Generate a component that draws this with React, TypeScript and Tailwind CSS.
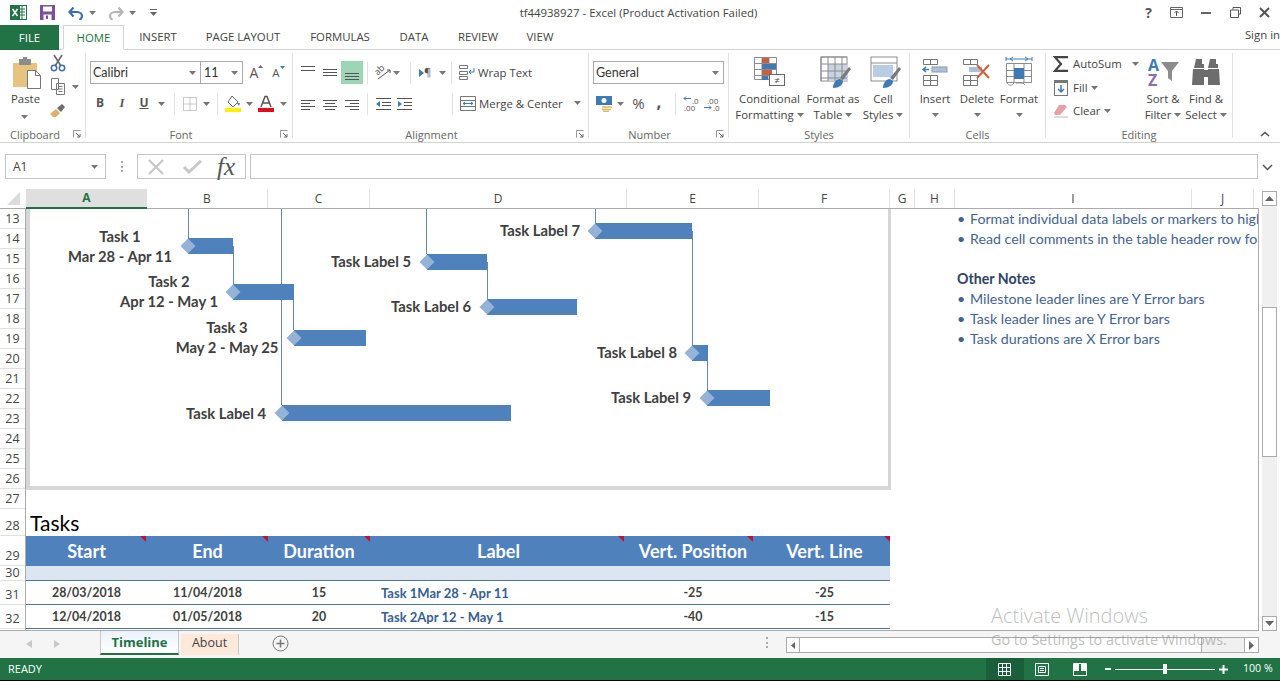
import type { ReactNode } from 'react';

const ui = "font-['Open_Sans',sans-serif]";
const cal = "font-['Lato',sans-serif]";

function Caret({ className = '' }: { className?: string }) {
  return (
    <svg width="7" height="4" viewBox="0 0 7 4" className={`shrink-0 ${className}`}>
      <path d="M0 0h7L3.500 4z" fill="#777" />
    </svg>
  );
}

function Launcher() {
  return (
    <svg width="8" height="8" viewBox="0 0 8 8" className="shrink-0">
      <path d="M.5 .5h7M.5 .5v7" stroke="#999" fill="none" />
      <path d="M3 3l4 4M7 4v3H4" stroke="#666" fill="none" />
    </svg>
  );
}

function Slot({ className = 'w-[22px]', children }: { className?: string; children?: ReactNode }) {
  return <div className={`h-[23px] flex items-center justify-center shrink-0 ${className}`}>{children}</div>;
}

function Sep() {
  return <div className="w-px h-[22px] bg-[#e1e1e1] shrink-0" />;
}

function Group({ width, label, launcher, labelClass = '', children }: { width: string; label: string; launcher?: boolean; labelClass?: string; children: ReactNode }) {
  return (
    <div className={`${width} h-[85px] mt-[3px] border-r border-[#e1e1e1] flex flex-col shrink-0`}>
      <div className="h-[71px] shrink-0">{children}</div>
      <div className="h-[14px] shrink-0 mt-[3px] relative flex items-center">
        <span className={`flex-1 text-center text-[11px] leading-none text-[#666] ${labelClass}`}>{label}</span>
        {launcher && <span className="absolute right-[4px] top-[3px] flex"><Launcher /></span>}
      </div>
    </div>
  );
}

function Lines({ d }: { d: string }) {
  return (
    <svg width="16" height="14" viewBox="0 0 16 14">
      <path d={d} stroke="#555" fill="none" />
    </svg>
  );
}

function BigBtn({ width, icon, line1, line2, caret }: { width: string; icon: ReactNode; line1: string; line2?: string; caret?: boolean }) {
  return (
    <div className={`${width} flex flex-col items-center shrink-0`}>
      <div className="h-[36px] mt-[1px] flex items-center justify-center">{icon}</div>
      <div className="mt-[1px] text-[11.400px] leading-[16px] text-[#444] whitespace-nowrap">{line1}</div>
      <div className="h-[16px] flex items-center gap-[3px] text-[11.400px] leading-[16px] text-[#444] whitespace-nowrap">
        {line2}
        {caret && <Caret />}
      </div>
    </div>
  );
}

function TableIcon({ variant }: { variant: 'table' | 'cell' }) {
  const rows = variant === 'table' ? [0, 7, 14, 21] : [0, 9, 24];
  const cols = variant === 'table' ? [0, 7, 14, 21, 28] : [0, 26];
  return (
    <svg width="32" height="32" viewBox="0 0 32 32" className="ml-[5px]">
      <rect x="1" y="1" width="26" height="24" fill="#fff" stroke="#8c8c8c" />
      {variant === 'table' ? (
        <>
          <rect x="8" y="8" width="20" height="17" fill="#c9d3e3" />
          {rows.map((y) => <path key={y} d={`M1 ${y + 1}h26`} stroke="#8c8c8c" />)}
          {cols.slice(0, 4).map((x) => <path key={x} d={`M${x + 1} 1v24`} stroke="#8c8c8c" />)}
        </>
      ) : (
        <>
          <path d="M1 7h26" stroke="#8c8c8c" />
          <rect x="3" y="9" width="20" height="12" fill="#b8cce4" />
        </>
      )}
      <path d="M20 22l9-11 2 2-8 11z" fill="#7a7a7a" />
      <path d="M13 32c0-5 3-9 7-9l3 2c0 4-4 7-10 7z" fill="#3f7ab8" />
    </svg>
  );
}

function Ribbon() {
  return (
    <div className={`h-[93px] border-b border-[#d4d4d4] flex bg-white ${ui}`}>
      <Group width="w-[86px]" label="Clipboard" launcher labelClass="pr-[26px] text-left pl-[10px]">
        <div className="flex">
          <div className="w-[50px] pl-[12px] flex flex-col">
            <svg width="30" height="32" viewBox="0 0 30 32" className="mt-[4px]">
              <rect x="1" y="6" width="24" height="24" fill="#e6c47f" />
              <rect x="7" y="2" width="12" height="6" fill="#8c8c8c" />
              <rect x="11" y="0" width="4" height="3" fill="#8c8c8c" />
              <path d="M15.500 13.500h8l5 5v13h-13z" fill="#fff" stroke="#777" />
              <path d="M23.500 13.500v5h5" fill="none" stroke="#777" />
            </svg>
            <div className="text-[11.400px] leading-[16px] mt-[2px] -ml-[1px] text-[#444]">Paste</div>
            <Caret className="ml-[9px] mt-[8px]" />
          </div>
          <div className="flex flex-col pt-[1px]">
            <svg width="16" height="18" viewBox="0 0 16 18">
              <path d="M4 1l7 11M12 1L5 12" stroke="#6a6a6a" strokeWidth="1.600" />
              <circle cx="4" cy="14" r="2.700" fill="none" stroke="#3f6fa8" strokeWidth="1.500" />
              <circle cx="12" cy="14" r="2.700" fill="none" stroke="#3f6fa8" strokeWidth="1.500" />
            </svg>
            <div className="flex items-center mt-[6px] gap-[6px]">
              <svg width="16" height="17" viewBox="0 0 16 17">
                <path d="M1.500 .5h7v11h-7zM6.500 5.500h8v11h-8z" fill="#fff" stroke="#7a7a7a" />
                <path d="M8.500 8.500h4M8.500 11h4M8.500 13.500h4" stroke="#7a7a7a" />
              </svg>
              <Caret />
            </div>
            <svg width="16" height="14" viewBox="0 0 16 14" className="mt-[8px]">
              <path d="M0 11l6-5 4 4-4 4H3z" fill="#d9b26d" />
              <path d="M7 5l5-4 3 3-4 5z" fill="#6d6d6d" />
            </svg>
          </div>
        </div>
      </Group>

      <Group width="w-[207px]" label="Font" launcher labelClass="pr-[16px]">
        <div className="flex items-center pl-[4px] mt-[8px] h-[23px]">
          <div className={`w-[111px] h-[23px] border border-[#ababab] flex items-center justify-between pl-[2px] pr-[4px] pt-[1px] text-[12.500px] text-[#333] ${cal}`}>
            Calibri<Caret />
          </div>
          <div className={`w-[42px] h-[23px] border border-[#ababab] border-l-0 flex items-center justify-between pl-[3px] pr-[4px] pt-[1px] text-[12.500px] text-[#333] ${cal}`}>
            11<Caret />
          </div>
          <Slot className="w-[22px]">
            <span className="text-[14px] text-[#555] relative">A<svg width="5" height="3" className="absolute right-[-5px] top-[3px]"><path d="M0 3h5L2.500 0z" fill="#666" /></svg></span>
          </Slot>
          <Slot className="w-[22px]">
            <span className="text-[11.500px] text-[#555] relative">A<svg width="5" height="3" className="absolute right-[-5px] top-[2px]"><path d="M0 0h5L2.500 3z" fill="#3f7ab8" /></svg></span>
          </Slot>
        </div>
        <div className="flex items-center pl-[3px] mt-[8px]">
          <Slot><span className="text-[12px] font-bold text-[#555] -mt-[1px]">B</span></Slot>
          <Slot><span className="text-[12.500px] italic text-[#555] font-['Liberation_Serif',serif] font-bold -mt-[1px]">I</span></Slot>
          <Slot className="w-[22px]"><span className="text-[12px] underline font-bold text-[#555] -mt-[1px]">U</span></Slot>
          <Slot className="w-[12px]"><Caret /></Slot>
          <Slot className="w-[7px]" />
          <Sep />
          <Slot className="w-[29px]">
            <svg width="14" height="14" viewBox="0 0 14 14">
              <path d="M.5 .5h13v13H.5zM7 .5v13M.5 7h13" stroke="#999" strokeDasharray="1 1" fill="none" />
            </svg>
          </Slot>
          <Slot className="w-[4px]"><Caret /></Slot>
          <Slot className="w-[9px]" />
          <Sep />
          <Slot className="w-[30px]">
            <svg width="17" height="17" viewBox="0 0 17 17">
              <path d="M7 1l6 6-5 5-5-5z" fill="#fff" stroke="#666" />
              <path d="M12 8l2 3 1-3z" fill="#3f7ab8" />
              <rect x="0" y="13" width="16" height="4" fill="#fff200" />
            </svg>
          </Slot>
          <Slot className="w-[3px]"><Caret /></Slot>
          <Slot className="w-[30px]">
            <svg width="16" height="17" viewBox="0 0 16 17">
              <path d="M3 12L7 1.500h2L13 12M4.800 8h6.400" stroke="#555" strokeWidth="1.500" fill="none" />
              <rect x="0" y="13" width="16" height="4" fill="#e00b1c" />
            </svg>
          </Slot>
          <Slot className="w-[4px]"><Caret /></Slot>
        </div>
      </Group>

      <Group width="w-[296px]" label="Alignment" launcher labelClass="pr-[18px]">
        <div className="flex items-center pl-[4px] mt-[8px]">
          <Slot><Lines d="M1 .5h14M1 4.500h14" /></Slot>
          <Slot><Lines d="M1 3.500h14M1 6.500h14M1 9.500h14" /></Slot>
          <Slot className="w-[22px] bg-[#9fd5b7]"><Lines d="M1 7.500h14M1 10.500h14M1 13.500h14" /></Slot>
          <Slot className="w-[4px]" />
          <Sep />
          <Slot className="w-[29px]">
            <span className="relative w-[18px] h-[16px]">
              <span className="absolute left-[0px] top-[-2px] text-[9px] text-[#555] rotate-[-45deg]">ab</span>
              <svg width="18" height="16" viewBox="0 0 18 16" className="absolute left-0 top-0"><path d="M4 14L16 5M13 5h3v3" stroke="#555" fill="none" /></svg>
            </span>
          </Slot>
          <Slot className="w-[7px] -ml-[4px]"><Caret /></Slot>
          <Slot className="w-[10px]" />
          <Sep />
          <Slot className="w-[28px]">
            <span className="flex items-center text-[11px] text-[#555]">
              <svg width="5" height="8" viewBox="0 0 5 8"><path d="M0 0l5 4-5 4z" fill="#3f7ab8" /></svg>¶
            </span>
          </Slot>
          <Slot className="w-[7px]"><Caret /></Slot>
          <Slot className="w-[5px]" />
          <Sep />
          <div className="flex items-center ml-[7px] gap-[3px] text-[11.400px] text-[#444]">
            <svg width="16" height="16" viewBox="0 0 16 16">
              <path d="M.5 1.500h8v3h-8zM.5 7.500h8v3h-8zM.5 12.500h8v3h-8z" fill="none" stroke="#777" />
              <path d="M15 4v4h-5M12 6l-2 2 2 2" fill="none" stroke="#3f7ab8" />
            </svg>
            Wrap Text
          </div>
        </div>
        <div className="flex items-center pl-[4px] mt-[8px]">
          <Slot><Lines d="M1 3.500h14M1 6.500h9M1 9.500h14M1 12.500h9" /></Slot>
          <Slot><Lines d="M1 3.500h14M3 6.500h10M1 9.500h14M3 12.500h10" /></Slot>
          <Slot><Lines d="M1 3.500h14M6 6.500h9M1 9.500h14M6 12.500h9" /></Slot>
          <Slot className="w-[4px]" />
          <Sep />
          <Slot className="w-[29px]">
            <svg width="16" height="14" viewBox="0 0 16 14"><path d="M1 1.500h15M7 5.500h9M7 8.500h9M1 12.500h15" stroke="#555" /><path d="M5 4L1 7l4 3z" fill="#3f7ab8" /></svg>
          </Slot>
          <Slot className="w-[16px]">
            <svg width="16" height="14" viewBox="0 0 16 14"><path d="M0 1.500h15M7 5.500h8M7 8.500h8M0 12.500h15" stroke="#555" /><path d="M1 4l4 3-4 3z" fill="#3f7ab8" /></svg>
          </Slot>
          <Slot className="w-[39px]" />
          <Sep />
          <div className="flex items-center ml-[7px] gap-[3px] text-[11.400px] text-[#444]">
            <svg width="16" height="15" viewBox="0 0 16 15">
              <path d="M.5 .5h15v14H.5zM.5 4.500h15M.5 10.500h15" fill="none" stroke="#777" />
              <path d="M3 7.500h10M5 6l-2 1.500L5 9M11 6l2 1.500L11 9" fill="none" stroke="#3f7ab8" />
            </svg>
            Merge &amp; Center
            <Caret className="ml-[8px]" />
          </div>
        </div>
      </Group>

      <Group width="w-[140px]" label="Number" launcher labelClass="pr-[18px]">
        <div className="pl-[4px] mt-[8px]">
          <div className={`w-[131px] h-[23px] border border-[#ababab] flex items-center justify-between pl-[2px] pr-[4px] pt-[1px] text-[12.500px] text-[#333] ${cal}`}>
            General<Caret />
          </div>
        </div>
        <div className="flex items-center pl-[6px] mt-[8px]">
          <Slot className="w-[19px]">
            <svg width="17" height="16" viewBox="0 0 17 16">
              <rect x="0" y="0" width="16" height="9" fill="#3f7ab8" />
              <circle cx="8" cy="4.500" r="2.500" fill="#fff" />
              <path d="M6 11h10M6 13.500h9M7 15.500h6" stroke="#e3b85c" strokeWidth="1.500" />
            </svg>
          </Slot>
          <Slot className="w-[13px]"><Caret /></Slot>
          <Slot className="w-[23px]"><span className="text-[15px] text-[#555]">%</span></Slot>
          <Slot className="w-[18px]"><span className="text-[17px] font-bold text-[#555] leading-none mt-[-4px]">,</span></Slot>
          <Slot className="w-[7px]" />
          <Sep />
          <Slot className="w-[31px]">
            <svg width="18" height="17" viewBox="0 0 18 17" className="shrink-0">
              <path d="M8 3.500H1M3 1.500l-2 2 2 2" stroke="#3f7ab8" fill="none" />
              <text x="9" y="8.500" fontSize="8" fill="#555" fontFamily="Open Sans">.0</text>
              <text x="1" y="16" fontSize="8" fill="#555" fontFamily="Open Sans">.00</text>
            </svg>
          </Slot>
          <Slot className="w-[12px]">
            <svg width="18" height="17" viewBox="0 0 18 17" className="shrink-0">
              <text x="3" y="8.500" fontSize="8" fill="#555" fontFamily="Open Sans">.00</text>
              <path d="M0 12.500h7M5 10.500l2 2-2 2" stroke="#3f7ab8" fill="none" />
              <text x="9" y="16" fontSize="8" fill="#555" fontFamily="Open Sans">.0</text>
            </svg>
          </Slot>
        </div>
      </Group>

      <Group width="w-[181px]" label="Styles">
        <div className="flex pl-[8px]">
          <BigBtn width="w-[65px]" line1="Conditional" line2="Formatting" caret icon={
            <svg width="32" height="32" viewBox="0 0 32 32">
              <path d="M.5 1.500h22v22H.5zM.5 7.500h22M.5 13.500h22M.5 19.500h22M8 1.500v22M15 1.500v22" fill="#fff" stroke="#8c8c8c" />
              <rect x="8" y="2" width="7" height="5" fill="#c8603c" />
              <rect x="8" y="8" width="14" height="5" fill="#3f7ab8" />
              <rect x="8" y="14" width="10" height="5" fill="#c8603c" />
              <rect x="8" y="20" width="6" height="4" fill="#3f7ab8" />
              <rect x="15.500" y="18.500" width="15" height="11" fill="#fff" stroke="#666" />
              <text x="23" y="28" fontSize="10" textAnchor="middle" fill="#444" fontFamily="Open Sans">≠</text>
            </svg>
          } />
          <BigBtn width="w-[62px]" line1="Format as" line2="Table" caret icon={<TableIcon variant="table" />} />
          <BigBtn width="w-[38px]" line1="Cell" line2="Styles" caret icon={<TableIcon variant="cell" />} />
        </div>
      </Group>

      <Group width="w-[136px]" label="Cells">
        <div className="flex pl-[4px]">
          <BigBtn width="w-[42px]" line1="Insert" caret icon={
            <svg width="28" height="30" viewBox="0 0 28 30" className="-ml-[2px]">
              <path d="M3.500 2.500h14v5h-14zM10.500 2.500v5M3.500 18.500h14v10h-14zM3.500 23.500h14M10.500 18.500v10" fill="none" stroke="#777" />
              <rect x="12" y="10" width="15" height="5" fill="#b0bfd4" stroke="#8a9ab0" />
              <path d="M9 12.500H3M6 10l-3 2.500L6 15" stroke="#3f7ab8" fill="none" strokeWidth="1.500" />
            </svg>
          } />
          <BigBtn width="w-[42px]" line1="Delete" caret icon={
            <svg width="32" height="30" viewBox="0 0 32 30" className="-ml-[2px]">
              <path d="M3.500 2.500h14v5h-14zM10.500 2.500v5M3.500 18.500h14v10h-14zM3.500 23.500h14M10.500 18.500v10" fill="none" stroke="#777" />
              <rect x="9" y="10" width="13" height="5" fill="#b0bfd4" />
              <path d="M17 8l12 13M29 8L17 21" stroke="#d0603c" strokeWidth="2" />
            </svg>
          } />
          <BigBtn width="w-[42px]" line1="Format" caret icon={
            <svg width="30" height="32" viewBox="0 0 30 32">
              <path d="M2 3h26M2 1v4M28 1v4M6 3l3-2M6 3l3 2M24 3l-3-2M24 3l-3 2" stroke="#3f7ab8" fill="none" />
              <path d="M2.500 7.500h25v19h-25zM2.500 14.500h25M2.500 20.500h25M10 7.500v19M20 7.500v19" fill="none" stroke="#8c8c8c" />
              <rect x="10" y="12" width="10" height="11" fill="#3f7ab8" />
              <path d="M3 27c2 3 5 3 7 0M12 27h7l2 2" stroke="#8c8c8c" fill="none" />
            </svg>
          } />
        </div>
      </Group>

      <Group width="w-[187px]" label="Editing">
        <div className="flex">
          <div className="w-[96px] pl-[7px] flex flex-col text-[11.400px] text-[#444]">
            <div className="flex items-center h-[23px] -mt-[1px] gap-[4px]">
              <svg width="16" height="16" viewBox="0 0 16 16" className="shrink-0"><path d="M15 1.200H2l6 6.800-6 6.800h13" fill="none" stroke="#444" strokeWidth="2.200" /></svg>
              <span>AutoSum</span>
              <Caret className="ml-[6px]" />
            </div>
            <div className="flex items-center h-[23px] mt-[1px] gap-[4px]">
              <svg width="16" height="16" viewBox="0 0 16 16" className="shrink-0"><rect x="1.500" y=".5" width="13" height="15" fill="#fff" stroke="#777" /><rect x="1" y="0" width="14" height="3" fill="#777" /><path d="M8 5v7M5 9l3 3 3-3" stroke="#3f7ab8" strokeWidth="1.500" fill="none" /></svg>
              <span>Fill</span>
              <Caret className="-ml-[1px]" />
            </div>
            <div className="flex items-center h-[23px] gap-[4px]">
              <svg width="16" height="14" viewBox="0 0 16 14" className="shrink-0"><path d="M6 1l6 0 2 2-7 8H2L1 9z" fill="#e9a1a8" /><path d="M1 13h14" stroke="#bbb" /></svg>
              <span>Clear</span>
              <Caret />
            </div>
          </div>
          <BigBtn width="w-[42px]" line1="Sort &amp;" line2="Filter" caret icon={
            <span className="relative w-[32px] h-[32px] flex">
              <span className="absolute left-[1px] top-[1px] text-[16px] leading-[16px] font-bold text-[#3f7ab8]">A</span>
              <span className="absolute left-[1px] top-[17px] text-[16px] leading-[15px] font-bold text-[#8c6bb1]">Z</span>
              <svg width="18" height="20" viewBox="0 0 18 20" className="absolute left-[14px] top-[6px]"><path d="M0 0h18l-7 9v10l-4-3V9z" fill="#8c8c8c" /></svg>
            </span>
          } />
          <BigBtn width="w-[44px]" line1="Find &amp;" line2="Select" caret icon={
            <svg width="28" height="26" viewBox="0 0 28 26">
              <path d="M4 0h6v5h2v4H2zM18 0h6v5h2v4H16zM1 10h11v16H0zM16 10h11l1 16H16zM12 11h4v7h-4z" fill="#6d6d6d" />
            </svg>
          } />
        </div>
      </Group>

      <div className="flex-1 flex items-end justify-end pr-[10px] pb-[5px]">
        <svg width="10" height="6" viewBox="0 0 10 6"><path d="M1 5l4-3.500L9 5" stroke="#555" strokeWidth="1.600" fill="none" /></svg>
      </div>
    </div>
  );
}

function TitleBar() {
  return (
    <div className={`h-[25px] flex items-center bg-white ${ui}`}>
      <div className="flex-1 flex items-center pl-[10px]">
        <svg width="17" height="17" viewBox="0 0 17 17">
          <rect x="7" y="1.500" width="9.500" height="14" fill="#fff" stroke="#217346" />
          <path d="M9 5h6M9 8h6M9 11h6M12 2v13" stroke="#217346" />
          <rect x="0" y="1" width="10" height="15" fill="#217346" />
          <path d="M2.500 5l5 7M7.500 5l-5 7" stroke="#fff" strokeWidth="1.500" />
        </svg>
        <svg width="15" height="15" viewBox="0 0 15 15" className="ml-[13px]">
          <path d="M0 0h15v15H0z" fill="#7b4f9e" />
          <rect x="3" y="1.500" width="9" height="5" fill="#fff" />
          <rect x="3.500" y="9.500" width="8" height="5.500" fill="#fff" />
          <rect x="6" y="10.500" width="2" height="3.500" fill="#7b4f9e" />
        </svg>
        <svg width="16" height="14" viewBox="0 0 16 14" className="ml-[13px]">
          <path d="M1.500 6H9c3 0 5 2 5 4s-1 3-2.500 4M5.500 1.500L1.500 6l4 4.500" fill="none" stroke="#3a6ea8" strokeWidth="2.200" />
        </svg>
        <Caret className="ml-[5px]" />
        <svg width="16" height="14" viewBox="0 0 16 14" className="ml-[12px]">
          <path d="M14.500 6H7C4 6 2 8 2 10s1 3 2.500 4M10.500 1.500l4 4.500-4 4.500" fill="none" stroke="#b5b5b5" strokeWidth="2.200" />
        </svg>
        <Caret className="ml-[5px]" />
        <svg width="7" height="7" viewBox="0 0 7 7" className="ml-[14px]"><path d="M0 .5h7" stroke="#666" /><path d="M0 3h7L3.500 7z" fill="#666" /></svg>
      </div>
      <div className="text-[11.400px] text-[#444] whitespace-nowrap mr-[3px]">tf44938927 - Excel (Product Activation Failed)</div>
      <div className="flex-1 flex items-center justify-end pr-[10px] text-[#555]">
        <span className="text-[14px] font-bold leading-none">?</span>
        <svg width="13" height="11" viewBox="0 0 13 11" className="ml-[18px]"><path d="M.5 .5h12v10H.5zM.5 2.500h12" stroke="#666" fill="none" /><path d="M6.500 9V4M4.500 6l2-2 2 2" stroke="#555" fill="none" /></svg>
        <svg width="10" height="3" viewBox="0 0 10 3" className="ml-[18px]"><rect width="10" height="2" y="1" fill="#666" /></svg>
        <svg width="11" height="11" viewBox="0 0 11 11" className="ml-[19px]"><path d="M3 2.500V.5h7.500v6.500H8.500M.5 3h8v7.500h-8z" stroke="#555" fill="#fff" /></svg>
        <svg width="11" height="11" viewBox="0 0 11 11" className="ml-[18px]"><path d="M1 1l9 9M10 1l-9 9" stroke="#555" strokeWidth="2" /></svg>
      </div>
    </div>
  );
}

const tabs: [string, string][] = [
  ['INSERT', 'w-[68px]'],
  ['PAGE LAYOUT', 'w-[102px]'],
  ['FORMULAS', 'w-[92px]'],
  ['DATA', 'w-[56px]'],
  ['REVIEW', 'w-[72px]'],
  ['VIEW', 'w-[52px]'],
];

function TabRow() {
  return (
    <div className={`h-[25px] flex border-b border-[#d4d4d4] text-[11.400px] ${ui}`}>
      <div className="w-[59px] h-[25px] bg-[#217346] text-white flex items-center justify-center">FILE</div>
      <div className="ml-[4px] w-[61px] h-[25px] border border-[#d4d4d4] border-b-white bg-white text-[#217346] flex items-center justify-center">HOME</div>
      {tabs.map(([t, w]) => (
        <div key={t} className={`${w} h-[24px] flex items-center justify-center text-[#444]`}>{t}</div>
      ))}
      <div className="ml-auto h-[20px] flex items-center text-[#444]">Sign in</div>
    </div>
  );
}

function FormulaBar() {
  return (
    <div className={`h-[46px] flex items-start pt-[11px] pl-[5px] bg-white ${ui}`}>
      <div className="w-[101px] h-[25px] border border-[#c4c4c4] flex items-center justify-between pl-[7px] pr-[7px] text-[12px] text-[#444]">
        A1<Caret />
      </div>
      <div className="w-[31px] h-[25px] flex items-center justify-center">
        <div className="w-[2px] h-[11px] border-l-2 border-dotted border-[#aaa]" />
      </div>
      <div className="w-[109px] h-[25px] border border-[#c4c4c4] flex items-center">
        <svg width="16" height="16" viewBox="0 0 16 16" className="ml-[10px]"><path d="M1 1l14 14M15 1L1 15" stroke="#c8c8c8" strokeWidth="2.200" /></svg>
        <svg width="19" height="14" viewBox="0 0 19 14" className="ml-[19px]"><path d="M1 7l5 5L18 1" stroke="#c8c8c8" strokeWidth="3" fill="none" /></svg>
        <span className="ml-[15px] text-[25px] leading-none italic text-[#555] font-['Liberation_Serif',serif]">fx</span>
      </div>
      <div className="ml-[4px] w-[1008px] h-[25px] border border-[#c4c4c4] bg-white" />
      <svg width="11" height="7" viewBox="0 0 11 7" className="ml-[4px] mt-[10px]"><path d="M1 1l4.500 4.500L10 1" stroke="#555" strokeWidth="1.500" fill="none" /></svg>
    </div>
  );
}

const columns: [string, string][] = [
  ['B', 'w-[121px]'],
  ['C', 'w-[102px]'],
  ['D', 'w-[257px]'],
  ['E', 'w-[132px]'],
  ['F', 'w-[131px]'],
  ['G', 'w-[25px]'],
  ['H', 'w-[40px]'],
  ['I', 'w-[237px]'],
  ['J', 'w-[62px]'],
];

function ColumnHeaders() {
  return (
    <div className={`h-[20px] flex border-b border-[#ababab] text-[12px] text-[#444] ${ui}`}>
      <div className="w-[26px] flex items-center justify-center">
        <svg width="13" height="13" viewBox="0 0 13 13"><path d="M13 0v13H0z" fill="#dcdcdc" /></svg>
      </div>
      <div className="w-[121px] bg-[#dfdfdf] border-b-2 border-[#217346] -mb-px flex items-center justify-center font-bold text-[#217346]">A</div>
      {columns.map(([c, w]) => (
        <div key={c} className={`${w} border-r border-[#e1e1e1] flex items-center justify-center`}>{c}</div>
      ))}
    </div>
  );
}

const rowHeads: [string, string][] = [
  ...Array.from({ length: 14 }, (_, i): [string, string] => [String(13 + i), 'h-[20px] items-center']),
  ['27', 'h-[20px] items-center'],
  ['28', 'h-[27px] items-end'],
  ['29', 'h-[30px] items-end'],
  ['30', 'h-[15px] items-center'],
  ['31', 'h-[24px] items-end'],
  ['32', 'h-[24px] items-end'],
];

function RowHeaders() {
  return (
    <div className={`w-[26px] shrink-0 border-r border-[#ababab] bg-white text-[12.500px] text-[#444] ${ui}`}>
      {rowHeads.map(([n, cls]) => (
        <div key={n} className={`${cls} flex justify-center border-b border-[#e1e1e1] leading-[18px]`}>{n}</div>
      ))}
    </div>
  );
}

const bars = [
  { x: 188, end: 233, y: 238 },
  { x: 233, end: 294, y: 284 },
  { x: 294, end: 366, y: 330 },
  { x: 282, end: 511, y: 405 },
  { x: 427, end: 487, y: 254 },
  { x: 487, end: 577, y: 299 },
  { x: 595, end: 692, y: 223 },
  { x: 692, end: 708, y: 345 },
  { x: 707, end: 770, y: 390 },
];

const leaders = [
  'M188.500 209V238',
  'M233.500 246V284',
  'M281.500 209V405',
  'M293.500 292V330',
  'M426.500 209V254',
  'M487.500 262V299',
  'M595.500 209V223',
  'M692.500 231V345',
  'M707.500 353V390',
];

const chartLabels: [string, number, number][] = [
  ['Task 1', 120, 242],
  ['Mar 28 - Apr 11', 120, 262],
  ['Task 2', 169, 287],
  ['Apr 12 - May 1', 169, 307],
  ['Task 3', 227, 333],
  ['May 2 - May 25', 227, 353],
  ['Task Label 4', 226, 419],
  ['Task Label 5', 371, 267],
  ['Task Label 6', 431, 312],
  ['Task Label 7', 540, 236],
  ['Task Label 8', 637, 358],
  ['Task Label 9', 651, 403],
];

function Chart() {
  return (
    <div className="w-[865px] h-[281px] shrink-0 border-l-4 border-r-[3px] border-b-4 border-[#d6d6d6] bg-white">
      <svg width="858" height="277" viewBox="30 209 858 277" className="block">
        {leaders.map((d) => <path key={d} d={d} stroke="#6b87a8" fill="none" />)}
        {bars.map((b) => (
          <g key={b.y}>
            <rect x={b.x} y={b.y} width={b.end - b.x} height="16" fill="#4f81bd" />
            <path d={`M${b.x} ${b.y + 0.5}l7.500 7.500-7.500 7.500-7.500-7.500z`} fill="#95b3d7" />
          </g>
        ))}
        {chartLabels.map(([t, x, y]) => (
          <text key={t} x={x} y={y} textAnchor="middle" fontSize="14.800" fontWeight="700" fill="#404040" fontFamily="Lato">{t}</text>
        ))}
      </svg>
    </div>
  );
}

function Notes() {
  const Bullet = ({ children }: { children: ReactNode }) => (
    <div className="h-[20px] flex items-center whitespace-nowrap">
      <span className="w-[13px] shrink-0 text-[#44618f]">•</span>
      {children}
    </div>
  );
  return (
    <div className={`pl-[66px] flex-1 min-w-0 overflow-hidden text-[14.200px] text-[#44648f] ${cal}`}>
      <Bullet>Format individual data labels or markers to highlight</Bullet>
      <Bullet>Read cell comments in the table header row for more</Bullet>
      <div className="h-[20px]" />
      <div className="h-[20px] flex items-center font-bold text-[#2f4468]">Other Notes</div>
      <Bullet>Milestone leader lines are Y Error bars</Bullet>
      <Bullet>Task leader lines are Y Error bars</Bullet>
      <Bullet>Task durations are X Error bars</Bullet>
    </div>
  );
}

const headers: [string, string][] = [
  ['Start', 'right-[1px]'],
  ['End', 'right-0'],
  ['Duration', 'right-0'],
  ['Label', 'right-[3px]'],
  ['Vert. Position', 'right-[6px]'],
  ['Vert. Line', 'right-0'],
];

const grid = 'grid grid-cols-[121px_121px_102px_257px_132px_131px]';

const taskRows = [
  ['28/03/2018', '11/04/2018', '15', 'Task 1Mar 28 - Apr 11', '-25', '-25'],
  ['12/04/2018', '01/05/2018', '20', 'Task 2Apr 12 - May 1', '-40', '-15'],
];

function TasksTable() {
  return (
    <div className={`w-[864px] ${cal}`}>
      <div className="h-[20px]" />
      <div className="h-[27px] pl-[4px] flex items-end text-[21px] leading-[26px] text-black">Tasks</div>
      <div className={`${grid} h-[30px] bg-[#4f81bd]`}>
        {headers.map(([h, pos]) => (
          <div key={h} className="relative flex items-center justify-center pt-[1px] text-[18px] font-bold text-white">
            {h}
            <span className={`absolute top-0 ${pos} w-[6px] h-[6px] bg-[#c0103c] [clip-path:polygon(0_0,100%_0,100%_100%)]`} />
          </div>
        ))}
      </div>
      <div className="h-[15px] bg-[#dce6f1] border-b border-[#4f6f9f]" />
      {taskRows.map((r) => (
        <div key={r[0]} className={`${grid} h-[24px] border-b border-[#4f6f9f] pt-[2px] text-[12.400px] font-bold text-[#404040]`}>
          {r.map((c, i) => (
            <div key={i} className={i === 3 ? 'flex items-center pl-[11px] text-[13px] text-[#376092]' : 'flex items-center justify-center'}>{c}</div>
          ))}
        </div>
      ))}
    </div>
  );
}

function VScroll() {
  return (
    <div className="w-[21px] pl-[3px] pr-[3px] pt-[2px] flex flex-col">
      <div className="h-[15px] border border-[#ababab] flex items-center justify-center">
        <svg width="9" height="5" viewBox="0 0 9 5"><path d="M0 5h9L4.500 0z" fill="#666" /></svg>
      </div>
      <div className="flex-1 bg-[#f0f0f0] pt-[101px]">
        <div className="h-[150px] bg-white border border-[#ababab]" />
      </div>
      <div className="h-[15px] border border-[#ababab] flex items-center justify-center">
        <svg width="9" height="5" viewBox="0 0 9 5"><path d="M0 0h9L4.500 5z" fill="#666" /></svg>
      </div>
    </div>
  );
}

function SheetTabs() {
  return (
    <div className={`h-[27px] bg-[#f5f5f5] flex items-start ${ui}`}>
      <svg width="6" height="8" viewBox="0 0 6 8" className="ml-[26px] mt-[9px]"><path d="M6 0v8L0 4z" fill="#c8c8c8" /></svg>
      <svg width="6" height="8" viewBox="0 0 6 8" className="ml-[22px] mt-[9px]"><path d="M0 0v8l6-4z" fill="#c8c8c8" /></svg>
      <div className="ml-[40px] w-[79px] h-[24px] pt-[2px] bg-gradient-to-b from-[#eaf3fa] to-white border-b-2 border-[#217346] border-r border-r-[#c8c8c8] border-l border-l-[#c8c8c8] flex items-center justify-center text-[13px] font-bold text-[#217346]">Timeline</div>
      <div className="ml-[2px] mt-[3px] w-[58px] h-[21px] pb-[2px] bg-[#fde9d9] border-r border-[#c8c8c8] flex items-center justify-center text-[12.500px] text-[#444]">About</div>
      <svg width="17" height="17" viewBox="0 0 17 17" className="ml-[33px] mt-[4px]">
        <circle cx="8.500" cy="8.500" r="7.500" fill="none" stroke="#777" />
        <path d="M8.500 4.500v8M4.500 8.500h8" stroke="#777" strokeWidth="1.500" />
      </svg>
      <div className="ml-[477px] mt-[6px] w-[2px] h-[11px] border-l-2 border-dotted border-[#aaa]" />
      <div className="ml-[18px] mt-[6px] w-[473px] h-[16px] border border-[#ababab] flex bg-[#f0f0f0]">
        <div className="w-[13px] border-r border-[#ababab] bg-white flex items-center justify-center">
          <svg width="4" height="7" viewBox="0 0 4 7"><path d="M4 0v7L0 3.500z" fill="#666" /></svg>
        </div>
        <div className="w-[402px] bg-white border-r border-[#ababab]" />
        <div className="flex-1" />
        <div className="w-[14px] border-l border-[#ababab] bg-white flex items-center justify-center">
          <svg width="5" height="9" viewBox="0 0 5 9"><path d="M0 0v9l5-4.500z" fill="#666" /></svg>
        </div>
      </div>
    </div>
  );
}

function StatusBar() {
  return (
    <div className={`h-[23px] bg-[#217346] border-b border-black flex items-center text-white text-[11px] ${ui}`}>
      <span className="pl-[8px]">READY</span>
      <div className="ml-auto flex items-center h-full">
        <div className="w-[38px] pr-[1px] h-full bg-[#19603a] flex items-center justify-center">
          <svg width="13" height="13" viewBox="0 0 13 13"><path d="M.5 .5h12v12H.5zM.5 4.500h12M.5 8.500h12M4.500 .5v12M8.500 .5v12" stroke="#fff" fill="none" /></svg>
        </div>
        <div className="w-[38px] pr-[2px] flex items-center justify-center">
          <svg width="14" height="13" viewBox="0 0 14 13"><path d="M.5 .5h13v12H.5zM3.500 3.500h7v6h-7zM5 5.500h4M5 7.500h4" stroke="#fff" fill="none" /></svg>
        </div>
        <div className="w-[38px] pr-[2px] flex items-center justify-center">
          <svg width="14" height="13" viewBox="0 0 14 13"><path d="M.5 .5h13v12H.5z" stroke="#fff" fill="none" /><path d="M1 1h5v7H1zM8 1h5v7H8z" fill="#fff" /></svg>
        </div>
        <div className="w-[6px] h-[2px] bg-white ml-[5px]" />
        <div className="w-[100px] h-px bg-white ml-[4px] flex items-center justify-center">
          <div className="w-[4px] h-[10px] bg-white" />
        </div>
        <svg width="9" height="9" viewBox="0 0 9 9" className="ml-[4px]"><path d="M4.500 0v9M0 4.500h9" stroke="#fff" strokeWidth="2" /></svg>
        <span className="w-[37px] ml-[15px] whitespace-nowrap text-[10.600px]">100 %</span>
      </div>
    </div>
  );
}

export default function App() {
  return (
    <div className="relative w-[1280px] h-[681px] overflow-hidden bg-white flex flex-col">
      <TitleBar />
      <TabRow />
      <Ribbon />
      <FormulaBar />
      <div className="h-[442px] flex">
        <div className="w-[1259px] flex flex-col">
          <ColumnHeaders />
          <div className="flex-1 flex border-r border-b border-[#ababab] min-h-0 overflow-hidden">
            <RowHeaders />
            <div className="flex-1 min-w-0">
              <div className="flex h-[280px]">
                <Chart />
                <Notes />
              </div>
              <TasksTable />
            </div>
          </div>
        </div>
        <VScroll />
      </div>
      <SheetTabs />
      <StatusBar />
      <div className={`absolute left-[991px] top-[603px] text-[#8f8f8f]/60 pointer-events-none ${ui}`}>
        <div className="text-[20px] leading-[26px] font-light">Activate Windows</div>
        <div className="text-[14.400px] leading-[20px] mt-[1px]">Go to Settings to activate Windows.</div>
      </div>
    </div>
  );
}
